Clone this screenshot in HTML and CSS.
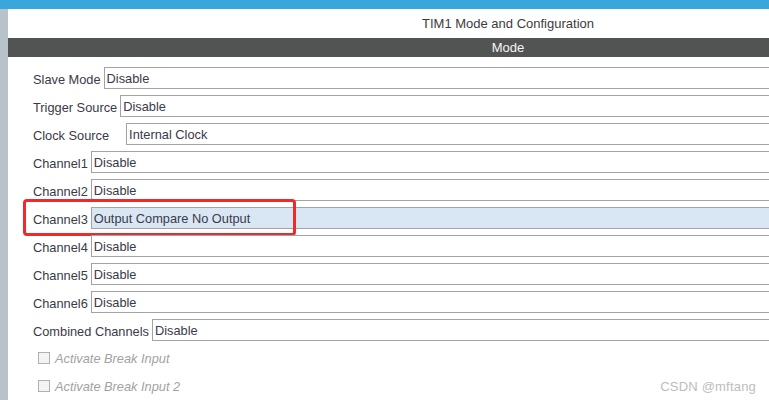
FILE: index.html
```html
<!DOCTYPE html>
<html>
<head>
<meta charset="utf-8">
<link rel="stylesheet" href="styles.css">
</head>
<body>
<div class="topbar"></div>
<div class="main">
  <div class="sidebar"></div>
  <div class="panel">
    <div class="title">TIM1 Mode and Configuration</div>
    <div class="section-bar">Mode</div>
    <div class="form">
      <div class="row"><span class="label">Slave Mode</span><div class="field">Disable</div></div>
      <div class="row"><span class="label">Trigger Source</span><div class="field">Disable</div></div>
      <div class="row"><span class="label label-wide">Clock Source</span><div class="field">Internal Clock</div></div>
      <div class="row"><span class="label">Channel1</span><div class="field">Disable</div></div>
      <div class="row"><span class="label">Channel2</span><div class="field">Disable</div></div>
      <div class="row"><span class="label">Channel3</span><div class="field field-selected">Output Compare No Output</div><div class="highlight"></div></div>
      <div class="row"><span class="label">Channel4</span><div class="field">Disable</div></div>
      <div class="row"><span class="label">Channel5</span><div class="field">Disable</div></div>
      <div class="row"><span class="label">Channel6</span><div class="field">Disable</div></div>
      <div class="row"><span class="label">Combined Channels</span><div class="field">Disable</div></div>
      <div class="row check-row"><span class="checkbox"></span><span class="check-label">Activate Break Input</span></div>
      <div class="row check-row"><span class="checkbox"></span><span class="check-label">Activate Break Input 2</span></div>
    </div>
  </div>
</div>
<div class="watermark">CSDN @mftang</div>
</body>
</html>
```
FILE: styles.css
```css
html, body {
  margin: 0;
  padding: 0;
  overflow: hidden;
  background: #ffffff;
  font-family: "Liberation Sans", Arial, sans-serif;
  font-size: 12.8px;
  color: #3a3a48;
}
.topbar {
  height: 9px;
  background: #39a7db;
}
.main {
  display: flex;
  height: 391px;
}
.sidebar {
  width: 8px;
  flex: none;
  background: #b8c3c9;
}
.panel {
  width: 1000px;
  flex: none;
}
.title {
  height: 29px;
  line-height: 29px;
  text-align: center;
  color: #3c3c3c;
  font-size: 13px;
}
.section-bar {
  height: 19px;
  line-height: 19px;
  background: #525453;
  color: #f4f4f4;
  text-align: center;
  font-size: 13px;
}
.form {
  padding: 7px 0 0 25px;
}
.row {
  position: relative;
  display: flex;
  align-items: center;
  height: 28px;
}
.label {
  flex: none;
  margin-right: 3px;
  padding-top: 2px;
  white-space: nowrap;
}
.label-wide {
  margin-right: 17px;
}
.field {
  flex: 1;
  height: 22px;
  line-height: 20px;
  box-sizing: border-box;
  border: 1px solid #a3a3a3;
  padding: 1px 0 0 2px;
  white-space: nowrap;
  background: #ffffff;
}
.field-selected {
  background: #d9e7f5;
}
.highlight {
  position: absolute;
  left: -10px;
  top: -5px;
  width: 273px;
  height: 37px;
  box-sizing: border-box;
  border: 3px solid #f0292a;
  border-radius: 4px;
}
.check-row {
  padding-left: 5px;
}
.checkbox {
  width: 12px;
  height: 12px;
  box-sizing: border-box;
  border: 1px solid #b0b0b0;
  background: #f3f3f3;
  margin-right: 5px;
  flex: none;
}
.check-label {
  font-style: italic;
  color: #a2a2a2;
  padding-top: 1px;
}
.watermark {
  position: absolute;
  right: 13px;
  top: 379px;
  color: #bdbdbd;
  font-size: 13px;
  letter-spacing: 0.2px;
}
```
